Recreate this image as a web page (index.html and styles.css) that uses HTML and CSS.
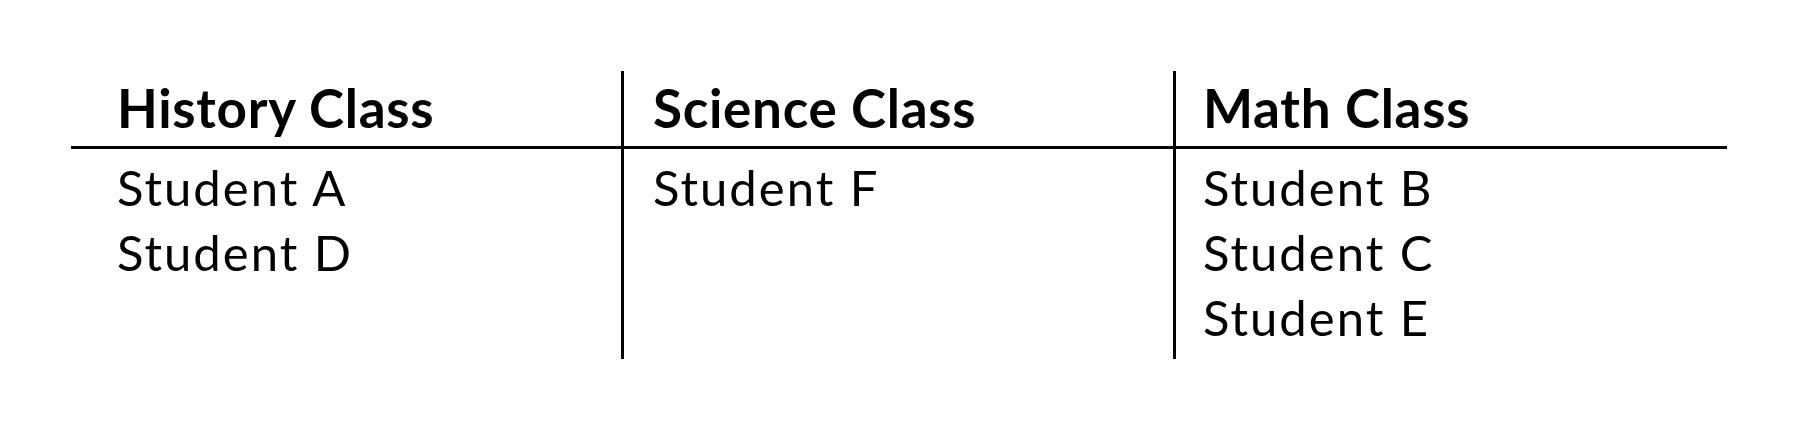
FILE: index.html
```html
<!DOCTYPE html>
<html lang="en">
<head>
<meta charset="utf-8">
<title>Classes</title>
<link rel="stylesheet" href="styles.css">
</head>
<body>
<div class="page">
  <div class="board">
    <div class="col col-first">
      <div class="head">History Class</div>
      <ul class="list">
        <li>Student A</li>
        <li>Student D</li>
      </ul>
    </div>
    <div class="col col-second">
      <div class="head">Science Class</div>
      <ul class="list">
        <li>Student F</li>
      </ul>
    </div>
    <div class="col col-third">
      <div class="head">Math Class</div>
      <ul class="list">
        <li>Student B</li>
        <li>Student C</li>
        <li>Student E</li>
      </ul>
    </div>
  </div>
</div>
</body>
</html>
```

FILE: styles.css
```css
html, body {
  margin: 0;
  padding: 0;
  background: #ffffff;
}
body {
  width: 1798px;
  height: 430px;
  font-family: "Lato", "Open Sans", sans-serif;
  color: #000000;
}
.page {
  padding: 71px 0 0 71px;
}
.board {
  display: grid;
  grid-template-columns: 550px 552px 554px;
}
.col {
  display: flex;
  flex-direction: column;
  border-left: 3px solid #000000;
}
.col-first {
  border-left: none;
}
.head {
  box-sizing: border-box;
  height: 78px;
  line-height: 74px;
  font-size: 53px;
  font-weight: 700;
  letter-spacing: 0.7px;
  border-bottom: 3px solid #000000;
  padding-left: 29px;
}
.list {
  list-style: none;
  margin: 0;
  padding: 6px 0 9px 29px;
  height: 210px;
  box-sizing: border-box;
}
.col-first .head,
.col-first .list {
  padding-left: 46px;
}
.col-third .head,
.col-third .list {
  padding-left: 27px;
}
.list li {
  font-size: 49px;
  line-height: 65px;
  font-weight: 400;
  letter-spacing: 2px;
}
```
